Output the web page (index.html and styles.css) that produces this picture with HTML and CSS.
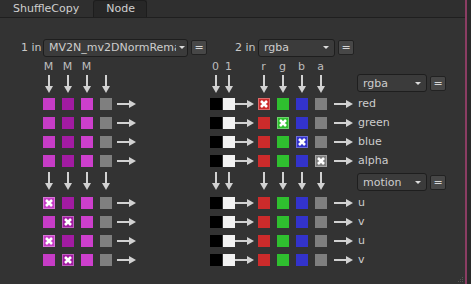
FILE: index.html
```html
<!DOCTYPE html>
<html lang="en">
<head>
    <meta charset="UTF-8">
    <title>ShuffleCopy</title>
    <link rel="stylesheet" href="styles.css">
</head>
<body>
<svg class="defs" width="0" height="0">
    <symbol id="dn" viewBox="0 0 8 18"><rect x="3" y="0" width="2" height="12"/><polygon points="0,11 8,11 4,18"/></symbol>
    <symbol id="rt" viewBox="0 0 19 8"><rect x="0" y="3" width="13" height="2"/><polygon points="12,0 12,8 19,4"/></symbol>
    <symbol id="x" viewBox="0 0 12 12"><path d="M3 3L9 9M9 3L3 9" stroke="#fff" stroke-width="2.6" fill="none"/></symbol>
</svg>

<div class="panel">
    <div class="tabs">
        <div class="tab active">ShuffleCopy</div>
        <div class="tab node">Node</div>
    </div>

    <div class="inputs">
        <span class="in-label">1 in</span>
        <div class="drop wide"><span class="val">MV2N_mv2DNormRemap</span><span class="caret"></span></div>
        <div class="eq">=</div>
        <span class="in-label second">2 in</span>
        <div class="drop mid"><span class="val">rgba</span><span class="caret"></span></div>
        <div class="eq">=</div>
    </div>

    <!-- column labels -->
    <div class="mrow lbl-row">
        <i></i><span>M</span><span>M</span><span>M</span><i></i><i></i><i></i>
        <span>0</span><span>1</span><i></i>
        <span>r</span><span>g</span><span>b</span><span>a</span><i></i><i></i>
    </div>

    <div class="mrow arr-row">
        <i></i>
        <svg class="dn"><use href="#dn"/></svg><svg class="dn"><use href="#dn"/></svg><svg class="dn"><use href="#dn"/></svg><svg class="dn"><use href="#dn"/></svg>
        <i></i><i></i>
        <svg class="dn"><use href="#dn"/></svg><svg class="dn"><use href="#dn"/></svg>
        <i></i>
        <svg class="dn"><use href="#dn"/></svg><svg class="dn"><use href="#dn"/></svg><svg class="dn"><use href="#dn"/></svg><svg class="dn"><use href="#dn"/></svg>
        <i></i>
        <div class="pick"><div class="drop out"><span class="val">rgba</span><span class="caret"></span></div><div class="eq">=</div></div>
    </div>

    <div class="mrow row">
        <i></i><span class="sq m1"></span><span class="sq m2"></span><span class="sq m3"></span><span class="sq gr"></span>
        <svg class="rt"><use href="#rt"/></svg><i></i>
        <span class="sq bk"></span><span class="sq wh"></span><svg class="rt"><use href="#rt"/></svg>
        <span class="sq r on"><svg><use href="#x"/></svg></span><span class="sq g"></span><span class="sq b"></span><span class="sq gr"></span>
        <svg class="rt"><use href="#rt"/></svg><span class="name">red</span>
    </div>
    <div class="mrow row">
        <i></i><span class="sq m1"></span><span class="sq m2"></span><span class="sq m3"></span><span class="sq gr"></span>
        <svg class="rt"><use href="#rt"/></svg><i></i>
        <span class="sq bk"></span><span class="sq wh"></span><svg class="rt"><use href="#rt"/></svg>
        <span class="sq r"></span><span class="sq g on"><svg><use href="#x"/></svg></span><span class="sq b"></span><span class="sq gr"></span>
        <svg class="rt"><use href="#rt"/></svg><span class="name">green</span>
    </div>
    <div class="mrow row">
        <i></i><span class="sq m1"></span><span class="sq m2"></span><span class="sq m3"></span><span class="sq gr"></span>
        <svg class="rt"><use href="#rt"/></svg><i></i>
        <span class="sq bk"></span><span class="sq wh"></span><svg class="rt"><use href="#rt"/></svg>
        <span class="sq r"></span><span class="sq g"></span><span class="sq b on"><svg><use href="#x"/></svg></span><span class="sq gr"></span>
        <svg class="rt"><use href="#rt"/></svg><span class="name">blue</span>
    </div>
    <div class="mrow row">
        <i></i><span class="sq m1"></span><span class="sq m2"></span><span class="sq m3"></span><span class="sq gr"></span>
        <svg class="rt"><use href="#rt"/></svg><i></i>
        <span class="sq bk"></span><span class="sq wh"></span><svg class="rt"><use href="#rt"/></svg>
        <span class="sq r"></span><span class="sq g"></span><span class="sq b"></span><span class="sq gr on"><svg><use href="#x"/></svg></span>
        <svg class="rt"><use href="#rt"/></svg><span class="name">alpha</span>
    </div>

    <div class="mrow arr-row two">
        <i></i>
        <svg class="dn"><use href="#dn"/></svg><svg class="dn"><use href="#dn"/></svg><svg class="dn"><use href="#dn"/></svg><svg class="dn"><use href="#dn"/></svg>
        <i></i><i></i>
        <svg class="dn"><use href="#dn"/></svg><svg class="dn"><use href="#dn"/></svg>
        <i></i>
        <svg class="dn"><use href="#dn"/></svg><svg class="dn"><use href="#dn"/></svg><svg class="dn"><use href="#dn"/></svg><svg class="dn"><use href="#dn"/></svg>
        <i></i>
        <div class="pick"><div class="drop out"><span class="val">motion</span><span class="caret"></span></div><div class="eq">=</div></div>
    </div>

    <div class="mrow row">
        <i></i><span class="sq m1 on"><svg><use href="#x"/></svg></span><span class="sq m2"></span><span class="sq m3"></span><span class="sq gr"></span>
        <svg class="rt"><use href="#rt"/></svg><i></i>
        <span class="sq bk"></span><span class="sq wh"></span><svg class="rt"><use href="#rt"/></svg>
        <span class="sq r"></span><span class="sq g"></span><span class="sq b"></span><span class="sq gr"></span>
        <svg class="rt"><use href="#rt"/></svg><span class="name">u</span>
    </div>
    <div class="mrow row">
        <i></i><span class="sq m1"></span><span class="sq m2 on"><svg><use href="#x"/></svg></span><span class="sq m3"></span><span class="sq gr"></span>
        <svg class="rt"><use href="#rt"/></svg><i></i>
        <span class="sq bk"></span><span class="sq wh"></span><svg class="rt"><use href="#rt"/></svg>
        <span class="sq r"></span><span class="sq g"></span><span class="sq b"></span><span class="sq gr"></span>
        <svg class="rt"><use href="#rt"/></svg><span class="name">v</span>
    </div>
    <div class="mrow row">
        <i></i><span class="sq m1 on"><svg><use href="#x"/></svg></span><span class="sq m2"></span><span class="sq m3"></span><span class="sq gr"></span>
        <svg class="rt"><use href="#rt"/></svg><i></i>
        <span class="sq bk"></span><span class="sq wh"></span><svg class="rt"><use href="#rt"/></svg>
        <span class="sq r"></span><span class="sq g"></span><span class="sq b"></span><span class="sq gr"></span>
        <svg class="rt"><use href="#rt"/></svg><span class="name">u</span>
    </div>
    <div class="mrow row">
        <i></i><span class="sq m1"></span><span class="sq m2 on"><svg><use href="#x"/></svg></span><span class="sq m3"></span><span class="sq gr"></span>
        <svg class="rt"><use href="#rt"/></svg><i></i>
        <span class="sq bk"></span><span class="sq wh"></span><svg class="rt"><use href="#rt"/></svg>
        <span class="sq r"></span><span class="sq g"></span><span class="sq b"></span><span class="sq gr"></span>
        <svg class="rt"><use href="#rt"/></svg><span class="name">v</span>
    </div>

    <svg class="grip" width="8" height="8" viewBox="0 0 8 8">
        <rect x="6" y="2" width="1" height="1"/><rect x="4" y="4" width="1" height="1"/><rect x="6" y="4" width="1" height="1"/>
        <rect x="2" y="6" width="1" height="1"/><rect x="4" y="6" width="1" height="1"/><rect x="6" y="6" width="1" height="1"/>
    </svg>
</div>
</body>
</html>
```

FILE: styles.css
```css
body {
    margin: 0;
    background-color: #2a2a2a;
    font-family: "DejaVu Sans", Verdana, sans-serif;
    font-size: 11px;
    color: #c9c9c9;
}
.defs {
    position: absolute;
}
.panel {
    width: 467px;
    height: 284px;
    background-color: #333333;
    border-right: 2px solid #8b3d63;
    box-sizing: border-box;
    position: relative;
    overflow: hidden;
}

/* tabs */
.tabs {
    display: flex;
    align-items: flex-end;
    gap: 4px;
    height: 18px;
    padding-left: 3px;
    background-color: #2f2f2f;
    border-bottom: 1px solid #1f1f1f;
    box-sizing: border-box;
}
.tab {
    height: 16px;
    line-height: 16px;
}
.tab.active {
    padding: 0 10px;
    background-color: #2f2f2f;
    color: #cfcfcf;
}
.tab.node {
    padding: 0 11px 0 12px;
    background-color: #272727;
    border: 1px solid #1d1d1d;
    border-bottom: none;
    border-radius: 3px 3px 0 0;
    color: #d0d0d0;
}

/* input selectors */
.inputs {
    display: flex;
    align-items: center;
    height: 21px;
    margin-top: 19px;
    padding-left: 21px;
}
.in-label {
    width: 22px;
    white-space: nowrap;
}
.in-label.second {
    width: 23px;
    margin-left: 28px;
}
.drop {
    display: flex;
    align-items: center;
    height: 18px;
    padding: 0 5px;
    background-color: #3b3b3b;
    border: 1px solid #1e1e1e;
    border-radius: 3px;
    box-sizing: border-box;
    color: #cdcdcd;
}
.drop .val {
    flex: 1;
    overflow: hidden;
    white-space: nowrap;
}
.caret {
    width: 0;
    height: 0;
    margin-left: 3px;
    border-left: 3px solid transparent;
    border-right: 3px solid transparent;
    border-top: 3px solid #dcdcdc;
}
.drop.wide {
    width: 145px;
}
.drop.wide .val {
    flex: none;
    width: 127px;
}
.drop.mid {
    width: 77px;
}
.drop.out {
    width: 70px;
}
.eq {
    width: 16px;
    height: 15px;
    margin-left: 3px;
    line-height: 13px;
    text-align: center;
    background-color: #474747;
    border: 1px solid #222222;
    border-radius: 2px;
    box-sizing: border-box;
    color: #d6d6d6;
}

/* shuffle matrix */
.mrow {
    display: grid;
    grid-template-columns: 39px repeat(4, 19px) 23px 71px 13px 13px 19px repeat(4, 19px) 26px 1fr;
    align-items: center;
    justify-items: center;
}
.lbl-row {
    height: 16px;
    color: #bdbdbd;
}
.arr-row {
    height: 20px;
    align-items: start;
}
.arr-row.two {
    height: 23px;
}
.row {
    height: 19px;
}
.dn {
    width: 8px;
    height: 18px;
    margin-top: 1px;
    fill: #d2d2d2;
}
.arr-row.two .dn {
    margin-top: 2px;
}
.rt {
    width: 19px;
    height: 8px;
    fill: #d2d2d2;
}
.pick {
    display: flex;
    align-items: center;
    justify-self: start;
    margin-left: 1px;
}
.arr-row.two .pick {
    margin-top: 3px;
}
.name {
    justify-self: start;
    padding-left: 2px;
    color: #cdcdcd;
}

.sq {
    display: block;
    width: 12px;
    height: 12px;
}
.sq svg {
    display: block;
    width: 12px;
    height: 12px;
}
.sq.on {
    box-shadow: inset 0 0 0 1px rgba(255, 255, 255, 0.3);
}
.m1 { background-color: #c63cc6; }
.m2 { background-color: #a21ba2; }
.m3 { background-color: #cd3fcd; }
.gr { background-color: #7f7f7f; }
.bk { background-color: #000000; }
.wh { background-color: #f2f2f2; }
.r { background-color: #cc2b2b; }
.g { background-color: #2fbf2f; }
.b { background-color: #3333cc; }

.grip {
    position: absolute;
    right: 1px;
    bottom: 1px;
    fill: #555555;
}
```
